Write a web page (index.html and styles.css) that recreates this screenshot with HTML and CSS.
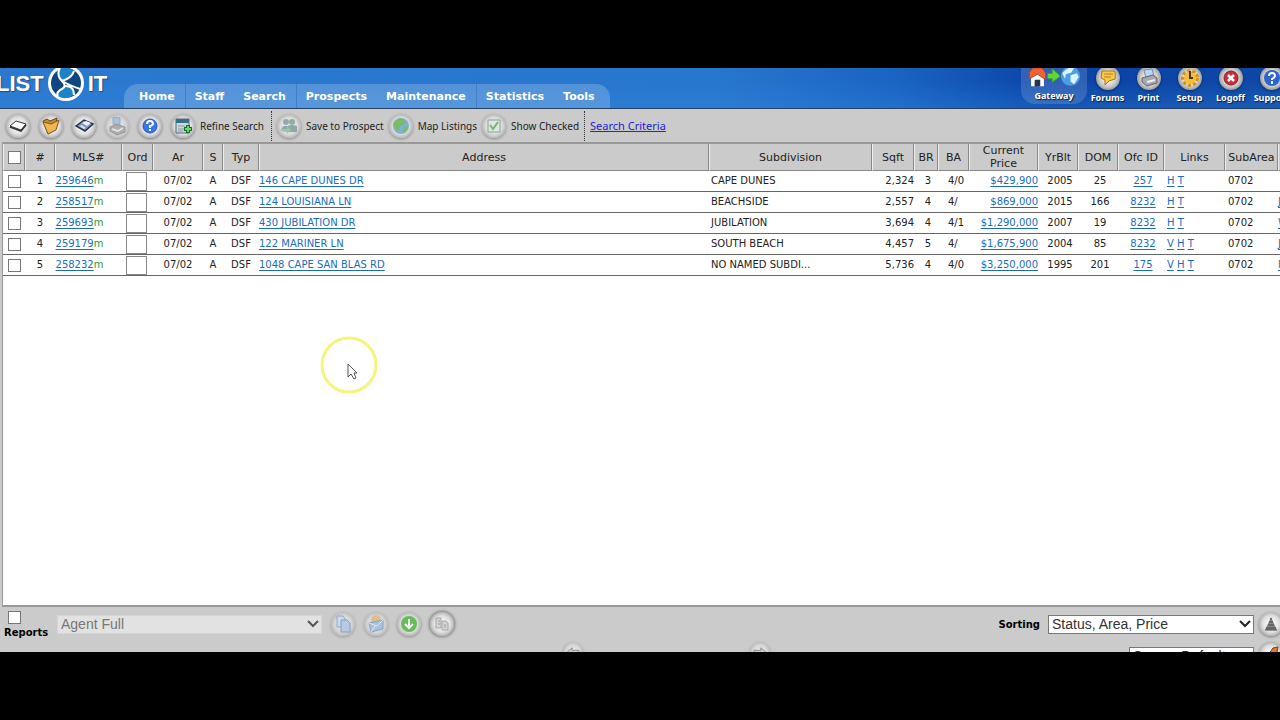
FILE: index.html
```html
<!DOCTYPE html>
<html lang="en">
<head>
  <meta charset="UTF-8">
  <title>List-It - Search Results</title>
  <link rel="stylesheet" href="styles.css">
</head>
<body>

<div class="app">
  <header class="header">
    <a class="logo" href="#">
      <span>LIST</span>
      <svg width="38" height="38" viewBox="0 0 38 38">
        <circle cx="19" cy="19" r="16.5" fill="#10467f" stroke="#fff" stroke-width="3"/>
        <path d="M13 4Q20 1 27 7Q25 14 15 17Q9 11 13 4Z" fill="#1b83c6"/>
        <path d="M11 32Q9 29 13 26Q15 24 17 22Q27 21 27 31Q19 37 11 32Z" fill="#1b83c6"/>
        <path d="M13 4Q9 11 15 17Q22 21 33 25M27 7Q25 14 15 17M15 17Q21 23 13 26Q9 29 11 32M17 22Q27 21 27 31" fill="none" stroke="#fff" stroke-width="2"/>
      </svg>
      <span>IT</span>
    </a>

    <nav class="menu">
      <a href="#">Home</a>
      <a href="#" class="divided">Staff</a>
      <a href="#">Search</a>
      <a href="#" class="divided">Prospects</a>
      <a href="#">Maintenance</a>
      <a href="#" class="divided">Statistics</a>
      <a href="#">Tools</a>
    </nav>

    <nav class="shortcuts">
      <a href="#" class="gateway">
        <svg width="58" height="24" viewBox="0 0 58 24">
          <path d="M4 12V22H8V17H13V22H18V12L11 5Z" fill="#fff"/>
          <path d="M8 22V15H14V22Z" fill="#26344f"/>
          <path d="M2 14V7L6 2H16L20 8V15L11 9Z" fill="#ee6236" stroke="#b83c1c"/>
          <path d="M22 8H27V3L36 11L27 18V14H22Z" fill="#60d737" stroke="#339c2e"/>
          <circle cx="47" cy="11" r="10.5" fill="#4b9ee6"/>
          <path d="M38 8Q44 0 51 2L48 7L42 9L41 14ZM47 10L54 8L56 12L51 20L47 17Z" fill="#e0f1ff"/>
        </svg>
        <span>Gateway</span>
      </a>
      <a href="#">
        <svg class="orb metal" viewBox="0 0 24 24"><path d="M6 5H18Q20 6 19 13L13 15L9 19V14L5 12Z" fill="#f6ca46" stroke="#a9761b"/><path d="M8 8H17M8 11H15" stroke="#b27f22"/></svg>
        <span>Forums</span>
      </a>
      <a href="#">
        <svg class="orb metal" viewBox="0 0 24 24"><path d="M7 4L15 3L17 10L9 12Z" fill="#b6d8f4" stroke="#688eb2"/><path d="M5 12L16 9L20 12V17L10 20L5 16Z" fill="#a4a9af" stroke="#666"/><path d="M10 16L18 14" stroke="#eee" stroke-width="2"/></svg>
        <span>Print</span>
      </a>
      <a href="#">
        <svg class="orb metal" viewBox="0 0 24 24"><circle cx="12" cy="12" r="7" fill="none" stroke="#d89216" stroke-width="4" stroke-dasharray="3 2"/><circle cx="12" cy="12" r="6" fill="#f6bd35"/><path d="M12 5V12H15" fill="none" stroke="#403421" stroke-width="2"/></svg>
        <span>Setup</span>
      </a>
      <a href="#">
        <svg class="orb metal" viewBox="0 0 24 24"><circle cx="12" cy="12" r="7" fill="#c62d3d" stroke="#8d1f2d"/><path d="M9 9L15 15M15 9L9 15" stroke="#fff" stroke-width="2.5"/></svg>
        <span>Logoff</span>
      </a>
      <a href="#">
        <svg class="orb metal" viewBox="0 0 24 24"><circle cx="12" cy="12" r="8" fill="#2d65ce"/><path d="M9 10Q9 7 12 7Q15 7 15 10Q15 11 12 13V14M12 15V18" fill="none" stroke="#fff" stroke-width="2"/></svg>
        <span>Support</span>
      </a>
    </nav>
  </header>

  <div class="toolbar">
    <button aria-label="Blank page"><svg class="orb" viewBox="0 0 24 24"><path d="M4 12L10 7L20 10L15 16Z" fill="#fff" stroke="#333"/><path d="M4 13L15 17L20 11" fill="none" stroke="#333" stroke-width="1.5"/></svg></button>
    <button aria-label="Open"><svg class="orb" viewBox="0 0 24 24"><path d="M4 7L8 5L11 7L18 4L16 16L9 20Z" fill="#c98a2b" stroke="#69471c"/><path d="M4 8L12 10L20 6L17 16L9 20Z" fill="#f1b750" stroke="#80581f"/></svg></button>
    <button aria-label="Save"><svg class="orb" viewBox="0 0 24 24"><path d="M4 12L12 6L21 10L13 17Z" fill="#8295bd" stroke="#27334f" stroke-width="1.5"/><path d="M10 9L14 7L19 9L15 12Z" fill="#eef3fc"/><path d="M7 12L10 11L14 14L12 15Z" fill="#d8dce5"/></svg></button>
    <button aria-label="Print" class="faded"><svg class="orb" viewBox="0 0 24 24"><path d="M8 3L15 4V12L8 10Z" fill="#8fbfec" stroke="#6f96bc"/><path d="M5 13L11 10L20 13V18L12 21L5 17Z" fill="#999" stroke="#777"/><path d="M7 15L13 17L18 14" fill="none" stroke="#eee" stroke-width="2"/></svg></button>
    <button aria-label="Help"><svg class="orb" viewBox="0 0 24 24"><circle cx="12" cy="12" r="7" fill="#3975e3" stroke="#255ac2"/><path d="M9 10Q9 7 12 7Q15 7 15 10Q15 11 12 12V14M12 15V17" fill="none" stroke="#fff" stroke-width="2"/></svg></button>
    <button><svg class="orb" viewBox="0 0 24 24"><path d="M5 5H18V19H5Z" fill="#cfd9dc" stroke="#496c78"/><path d="M5 5H18V9H5Z" fill="#376f83"/><path d="M7 12H14M7 15H13M7 17H12" stroke="#7e9ba3"/><path d="M17 11V19M13 15H21" stroke="#17672e" stroke-width="4"/><path d="M17 12V18M14 15H20" stroke="#6ad766" stroke-width="2"/></svg>Refine Search</button>
    <span class="separator"></span>
    <button class="soft"><svg class="orb" viewBox="0 0 24 24"><circle cx="9" cy="8" r="3" fill="#87a1a8"/><circle cx="15" cy="8" r="3" fill="#7cab91"/><path d="M4 17Q5 11 10 12Q14 10 20 12V18H12Z" fill="#829fa6"/><path d="M4 15H10V12L14 16L10 20V17H4Z" fill="#91c698"/></svg>Save to Prospect</button>
    <button class="soft"><svg class="orb" viewBox="0 0 24 24"><circle cx="12" cy="12" r="8" fill="#6aabd9"/><path d="M6 7L11 4L17 7L15 11L11 12L10 17L6 14L4 10ZM15 13L19 12L17 17L13 19Z" fill="#69b64f"/></svg>Map Listings</button>
    <button class="soft"><svg class="orb" viewBox="0 0 24 24"><path d="M6 6H18V18H6Z" fill="#e4eee9" stroke="#789b94"/><path d="M8 11L11 15L16 8" fill="none" stroke="#65ae62" stroke-width="2"/></svg>Show Checked</button>
    <span class="separator"></span>
    <a href="#">Search Criteria</a>
  </div>

  <main class="results">
    <table>
      <colgroup>
        <col class="w-check"><col class="w-num"><col class="w-mls"><col class="w-ord"><col class="w-area"><col class="w-status"><col class="w-type"><col><col class="w-subdivision"><col class="w-sqft"><col class="w-br"><col class="w-ba"><col class="w-price"><col class="w-year"><col class="w-dom"><col class="w-office"><col class="w-links"><col class="w-subarea"><col class="w-street">
      </colgroup>
      <thead>
        <tr>
          <th><input type="checkbox" aria-label="Select all"></th>
          <th>#</th><th>MLS#</th><th>Ord</th><th>Ar</th><th>S</th><th>Typ</th><th>Address</th><th>Subdivision</th><th>Sqft</th><th>BR</th><th>BA</th><th>Current<br>Price</th><th>YrBlt</th><th>DOM</th><th>Ofc ID</th><th>Links</th><th>SubArea</th><th></th>
        </tr>
      </thead>
      <tbody>
        <tr>
          <td><input type="checkbox" aria-label="Select 1"></td><td>1</td><td class="mls"><a href="#">259646</a>m</td><td><input type="text" aria-label="Order 1"></td><td>07/02</td><td>A</td><td>DSF</td><td class="left"><a href="#">146 CAPE DUNES DR</a></td><td class="subdivision">CAPE DUNES</td><td class="right">2,324</td><td class="inset">3</td><td class="ba">4/0</td><td class="right"><a href="#">$429,900</a></td><td class="inset">2005</td><td class="inset">25</td><td class="inset"><a href="#">257</a></td><td class="links"><a href="#">H</a> <a href="#">T</a></td><td class="subarea">0702</td><td></td>
        </tr>
        <tr>
          <td><input type="checkbox" aria-label="Select 2"></td><td>2</td><td class="mls"><a href="#">258517</a>m</td><td><input type="text" aria-label="Order 2"></td><td>07/02</td><td>A</td><td>DSF</td><td class="left"><a href="#">124 LOUISIANA LN</a></td><td class="subdivision">BEACHSIDE</td><td class="right">2,557</td><td class="inset">4</td><td class="ba">4/</td><td class="right"><a href="#">$869,000</a></td><td class="inset">2015</td><td class="inset">166</td><td class="inset"><a href="#">8232</a></td><td class="links"><a href="#">H</a> <a href="#">T</a></td><td class="subarea">0702</td><td class="left"><a href="#">J</a></td>
        </tr>
        <tr>
          <td><input type="checkbox" aria-label="Select 3"></td><td>3</td><td class="mls"><a href="#">259693</a>m</td><td><input type="text" aria-label="Order 3"></td><td>07/02</td><td>A</td><td>DSF</td><td class="left"><a href="#">430 JUBILATION DR</a></td><td class="subdivision">JUBILATION</td><td class="right">3,694</td><td class="inset">4</td><td class="ba">4/1</td><td class="right"><a href="#">$1,290,000</a></td><td class="inset">2007</td><td class="inset">19</td><td class="inset"><a href="#">8232</a></td><td class="links"><a href="#">H</a> <a href="#">T</a></td><td class="subarea">0702</td><td class="left"><a href="#">W</a></td>
        </tr>
        <tr>
          <td><input type="checkbox" aria-label="Select 4"></td><td>4</td><td class="mls"><a href="#">259179</a>m</td><td><input type="text" aria-label="Order 4"></td><td>07/02</td><td>A</td><td>DSF</td><td class="left"><a href="#">122 MARINER LN</a></td><td class="subdivision">SOUTH BEACH</td><td class="right">4,457</td><td class="inset">5</td><td class="ba">4/</td><td class="right"><a href="#">$1,675,900</a></td><td class="inset">2004</td><td class="inset">85</td><td class="inset"><a href="#">8232</a></td><td class="links"><a href="#">V</a> <a href="#">H</a> <a href="#">T</a></td><td class="subarea">0702</td><td class="left"><a href="#">J</a></td>
        </tr>
        <tr>
          <td><input type="checkbox" aria-label="Select 5"></td><td>5</td><td class="mls"><a href="#">258232</a>m</td><td><input type="text" aria-label="Order 5"></td><td>07/02</td><td>A</td><td>DSF</td><td class="left"><a href="#">1048 CAPE SAN BLAS RD</a></td><td class="subdivision">NO NAMED SUBDI...</td><td class="right">5,736</td><td class="inset">4</td><td class="ba">4/0</td><td class="right"><a href="#">$3,250,000</a></td><td class="inset">1995</td><td class="inset">201</td><td class="inset"><a href="#">175</a></td><td class="links"><a href="#">V</a> <a href="#">H</a> <a href="#">T</a></td><td class="subarea">0702</td><td class="left"><a href="#">F</a></td>
        </tr>
      </tbody>
    </table>

    <svg class="pointer" width="58" height="58" viewBox="0 0 58 58">
      <circle cx="29" cy="29" r="27" fill="none" stroke="#f7f37c" stroke-width="3"/>
      <path d="M28 28V41L31 38L34 43L36 42L34 37H37Z" fill="#fff" stroke="#555"/>
    </svg>
  </main>

  <footer class="footer">
    <div class="footer-row">
      <div class="reports">
        <input type="checkbox" id="reports">
        <label for="reports">Reports</label>
      </div>
      <div class="select disabled">
        <select aria-label="Report type" disabled><option>Agent Full</option></select>
        <svg width="14" height="10" viewBox="0 0 14 10"><path d="M2 2L7 7L12 2" fill="none" stroke="#555" stroke-width="2"/></svg>
      </div>
      <div class="report-actions">
        <button class="faded" aria-label="Copy"><svg class="orb" viewBox="0 0 24 24"><path d="M6 4H12L14 7V15H6Z" fill="#d3e5fa" stroke="#6797cf"/><path d="M10 8H16L19 11V20H10Z" fill="#a9cbf4" stroke="#5585be"/></svg></button>
        <button class="faded" aria-label="Email"><svg class="orb" viewBox="0 0 24 24"><circle cx="12" cy="8" r="5" fill="#e9b667"/><path d="M5 11L19 8V17L7 20Z" fill="#8dbdec" stroke="#5b89bc"/><path d="M5 11L13 14L19 8M7 20L11 14" fill="none" stroke="#f2f7ff"/></svg></button>
        <button class="soft-icon" aria-label="Download"><svg class="orb" viewBox="0 0 24 24"><circle cx="12" cy="12" r="8" fill="#4fb83e"/><path d="M12 7V16M8 12L12 16L16 12" fill="none" stroke="#fff" stroke-width="2"/></svg></button>
        <button aria-label="Export"><svg class="orb dark" viewBox="0 0 24 24"><path d="M6 6H11V16H6ZM12 9H16L18 11V18H12Z" fill="#d5d5d5" stroke="#a5a5a5"/><path d="M8 9H10M8 12H10M14 13H16M14 15H16" stroke="#999"/></svg></button>
      </div>
      <label class="sort-label" for="sorting">Sorting</label>
      <div class="select sorting">
        <select id="sorting"><option>Status, Area, Price</option></select>
        <svg width="14" height="10" viewBox="0 0 14 10"><path d="M2 2L7 7L12 2" fill="none" stroke="#222" stroke-width="2"/></svg>
      </div>
      <button aria-label="Sort order"><svg class="orb" viewBox="0 0 24 24"><path d="M12 5L18 18H6Z" fill="#888"/><path d="M11 7H13M10 10H14M9 13H15M7 16H17M6 18H18" stroke="#444"/></svg></button>
    </div>

    <div class="footer-row second">
      <div class="pager">
        <button class="faded" aria-label="Previous page"><svg class="orb small" viewBox="0 0 24 24"><path d="M5 12L11 7V10H19V14H11V17Z" fill="#ccc" stroke="#555"/></svg></button>
        <button class="faded" aria-label="Next page"><svg class="orb small" viewBox="0 0 24 24"><path d="M19 12L13 7V10H5V14H13V17Z" fill="#ccc" stroke="#555"/></svg></button>
      </div>
      <div class="format">
        <label for="format">Style</label>
        <div class="select">
          <select id="format"><option>Screen Default</option></select>
          <svg width="14" height="10" viewBox="0 0 14 10"><path d="M2 2L7 7L12 2" fill="none" stroke="#222" stroke-width="2"/></svg>
        </div>
        <button aria-label="Edit style"><svg class="orb" viewBox="0 0 24 24"><path d="M7 19L9 13L14 6L19 5L18 10L12 17Z" fill="#df7a35" stroke="#754020"/></svg></button>
      </div>
    </div>
  </footer>
</div>

</body>
</html>
```
FILE: styles.css
```css
* {
  box-sizing: border-box;
}

body {
  margin: 0;
  padding: 68px 0;
  height: 100vh;
  background: #000;
  color: #222;
  font-family: "DejaVu Sans", Verdana, sans-serif;
  font-size: 10px;
  overflow: hidden;
}

.app {
  display: flex;
  flex-direction: column;
  height: 100%;
  background: #cbcbcb;
  overflow: hidden;
}

button {
  display: flex;
  align-items: center;
  gap: 5px;
  padding: 0 2px;
  border: 0;
  background: none;
  color: #222;
  font-family: "Noto Sans", Tahoma, sans-serif;
  font-size: 10px;
  white-space: nowrap;
  cursor: pointer;
}

.orb {
  flex: none;
  width: 24px;
  height: 24px;
  border-radius: 50%;
  background: radial-gradient(circle, #f6f6f6 20%, #dedede 50%, #b0b0b0 72%);
  box-shadow: 0 1px 3px rgba(0, 0, 0, 0.4);
}

.orb.metal {
  background: radial-gradient(circle, #eee 20%, #ccc 50%, #999 72%);
}

.orb.dark {
  box-shadow: 0 0 3px 1px #777;
}

.orb.small {
  width: 20px;
  height: 20px;
}

.faded .orb {
  opacity: 0.6;
}

.soft .orb,
.soft-icon .orb {
  opacity: 0.8;
}

/* header */
.header {
  display: flex;
  flex: none;
  height: 41px;
  border-bottom: 1px solid #28405f;
  background: linear-gradient(to bottom, transparent 30%, rgba(50, 140, 225, 0.3)),
    linear-gradient(to right, #2b78cf 0%, #2876ce 56%, #1a64c1 70%, #0a43a7 82%, #0e48a6 100%);
  overflow: hidden;
}

.logo {
  display: flex;
  flex: none;
  gap: 3px;
  width: 124px;
  margin-left: -4px;
  color: #fff;
  font-family: "Liberation Sans", Arial, sans-serif;
  font-size: 22px;
  font-weight: bold;
  line-height: 32px;
  text-decoration: none;
  text-shadow: 1px 1px 1px #234e85;
}

.logo svg {
  flex: none;
  margin-top: -4px;
}

.menu {
  display: flex;
  align-self: flex-end;
  gap: 1px;
  height: 24px;
  margin-left: 4px;
  padding: 0 6px;
  border-radius: 14px 14px 0 0;
  background: rgba(255, 255, 255, 0.2);
}

.menu a {
  padding: 0 9px;
  color: #fff;
  font-size: 11px;
  font-weight: bold;
  line-height: 25px;
  text-decoration: none;
}

.menu .divided {
  border-left: 1px solid #437fc8;
}

.shortcuts {
  display: flex;
  margin-left: auto;
  margin-right: -12px;
}

.shortcuts a {
  display: flex;
  flex-direction: column;
  align-items: center;
  width: 41px;
  margin-top: -2px;
  color: #fff;
  font-family: "Noto Sans", sans-serif;
  font-size: 9px;
  font-weight: bold;
  line-height: 16px;
  text-decoration: none;
  text-shadow: 1px 1px 1px #123;
}

.shortcuts .gateway {
  width: 66px;
  height: 38px;
  border-radius: 0 0 14px 14px;
  background: rgba(255, 255, 255, 0.15);
}

/* toolbar */
.toolbar {
  display: flex;
  flex: none;
  align-items: center;
  gap: 5px;
  height: 33px;
  padding: 0 4px;
}

.toolbar .soft {
  padding: 0;
}

.toolbar a {
  color: #22d;
  font-family: "Noto Sans", Tahoma, sans-serif;
  font-size: 11px;
}

.separator {
  height: 30px;
  border-left: 1px dotted #333;
}

/* results */
.results {
  position: relative;
  flex: 1;
  margin-left: 2px;
  border: solid #999;
  border-width: 2px 0 2px 1px;
  background: #fff;
  overflow: hidden;
}

table {
  width: calc(100% + 20px);
  border-collapse: separate;
  border-spacing: 0;
  table-layout: fixed;
}

th {
  height: 27px;
  padding: 0;
  border-right: 1px solid #888;
  border-bottom: 1px solid #888;
  border-left: 1px solid #eee;
  background: #cbcbcb;
  font-size: 11px;
  font-weight: normal;
  line-height: 13px;
  overflow: hidden;
}

td {
  height: 21px;
  padding: 0;
  border-bottom: 1px solid #666;
  line-height: 20px;
  text-align: center;
  white-space: nowrap;
}

td a {
  color: #1a6cc0;
  text-underline-offset: 2px;
}

td.left {
  text-align: left;
}

td.subdivision {
  padding-left: 2px;
  text-align: left;
}

td.right {
  text-align: right;
}

td.mls {
  padding-right: 18px;
  color: #2a9a2a;
}

td.inset {
  padding-left: 4px;
}

td.ba {
  padding-left: 10px;
  text-align: left;
}

td.links {
  padding-left: 3px;
  text-align: left;
}

td.subarea {
  padding-left: 3px;
  text-align: left;
}

.w-check { width: 22px; }
.w-num { width: 30px; }
.w-mls { width: 67px; }
.w-ord { width: 31px; }
.w-area { width: 50px; }
.w-status { width: 20px; }
.w-type { width: 36px; }
.w-subdivision { width: 163px; }
.w-sqft { width: 42px; }
.w-br { width: 24px; }
.w-ba { width: 31px; }
.w-price { width: 69px; }
.w-year { width: 40px; }
.w-dom { width: 40px; }
.w-office { width: 46px; }
.w-links { width: 61px; }
.w-subarea { width: 53px; }
.w-street { width: 22px; }

input[type="checkbox"] {
  display: block;
  width: 13px;
  height: 13px;
  margin: 0 auto;
  border: 1px solid #777;
  background: #fff;
  appearance: none;
}

input[type="text"] {
  display: block;
  width: 21px;
  height: 19px;
  margin: 0 auto 0 4px;
  padding: 0;
  border: 1px solid #888;
  background: #fff;
}

.pointer {
  position: absolute;
  left: 317px;
  top: 192px;
}

/* footer */
.footer {
  flex: none;
  height: 45px;
  color: #000;
  overflow: hidden;
}

.footer label {
  font-weight: bold;
}

.footer-row {
  display: flex;
  align-items: center;
  height: 34px;
  margin-right: -5px;
}

.reports {
  display: flex;
  flex-direction: column;
  gap: 3px;
  width: 57px;
  padding-left: 4px;
}

.reports input {
  margin: 0 4px;
}

.select {
  display: grid;
  align-items: center;
  width: 125px;
}

.select select,
.select svg {
  grid-area: 1 / 1;
}

.select svg {
  justify-self: end;
  margin-right: 2px;
  pointer-events: none;
}

.select select {
  width: 100%;
  height: 19px;
  padding: 0 3px;
  border: 1px solid #777;
  border-radius: 0;
  background: #fff;
  color: #333;
  font-family: "Liberation Sans", Arial, sans-serif;
  font-size: 14px;
  line-height: 17px;
  opacity: 1;
  appearance: none;
}

.select.disabled {
  width: 265px;
}

.select.disabled select {
  border-color: #d5d5d5;
  background: #e2e2e2;
  color: #777;
}

.select.sorting {
  width: 206px;
  margin: 0 3px 0 8px;
}

.report-actions {
  display: flex;
  gap: 5px;
  margin-left: 7px;
}

.sort-label {
  margin-left: auto;
}

.footer-row.second {
  display: grid;
  grid-template-columns: 1fr auto 1fr;
  align-items: start;
  height: 24px;
  padding-left: 47px;
}

.pager {
  display: flex;
  grid-column: 2;
  justify-content: space-between;
  width: 211px;
  padding-top: 1px;
}

.format {
  display: flex;
  align-items: center;
  justify-self: end;
  gap: 3px;
}

.format .select {
  margin-top: 6px;
  margin-left: 13px;
}

.format label {
  margin-top: 8px;
}
```
